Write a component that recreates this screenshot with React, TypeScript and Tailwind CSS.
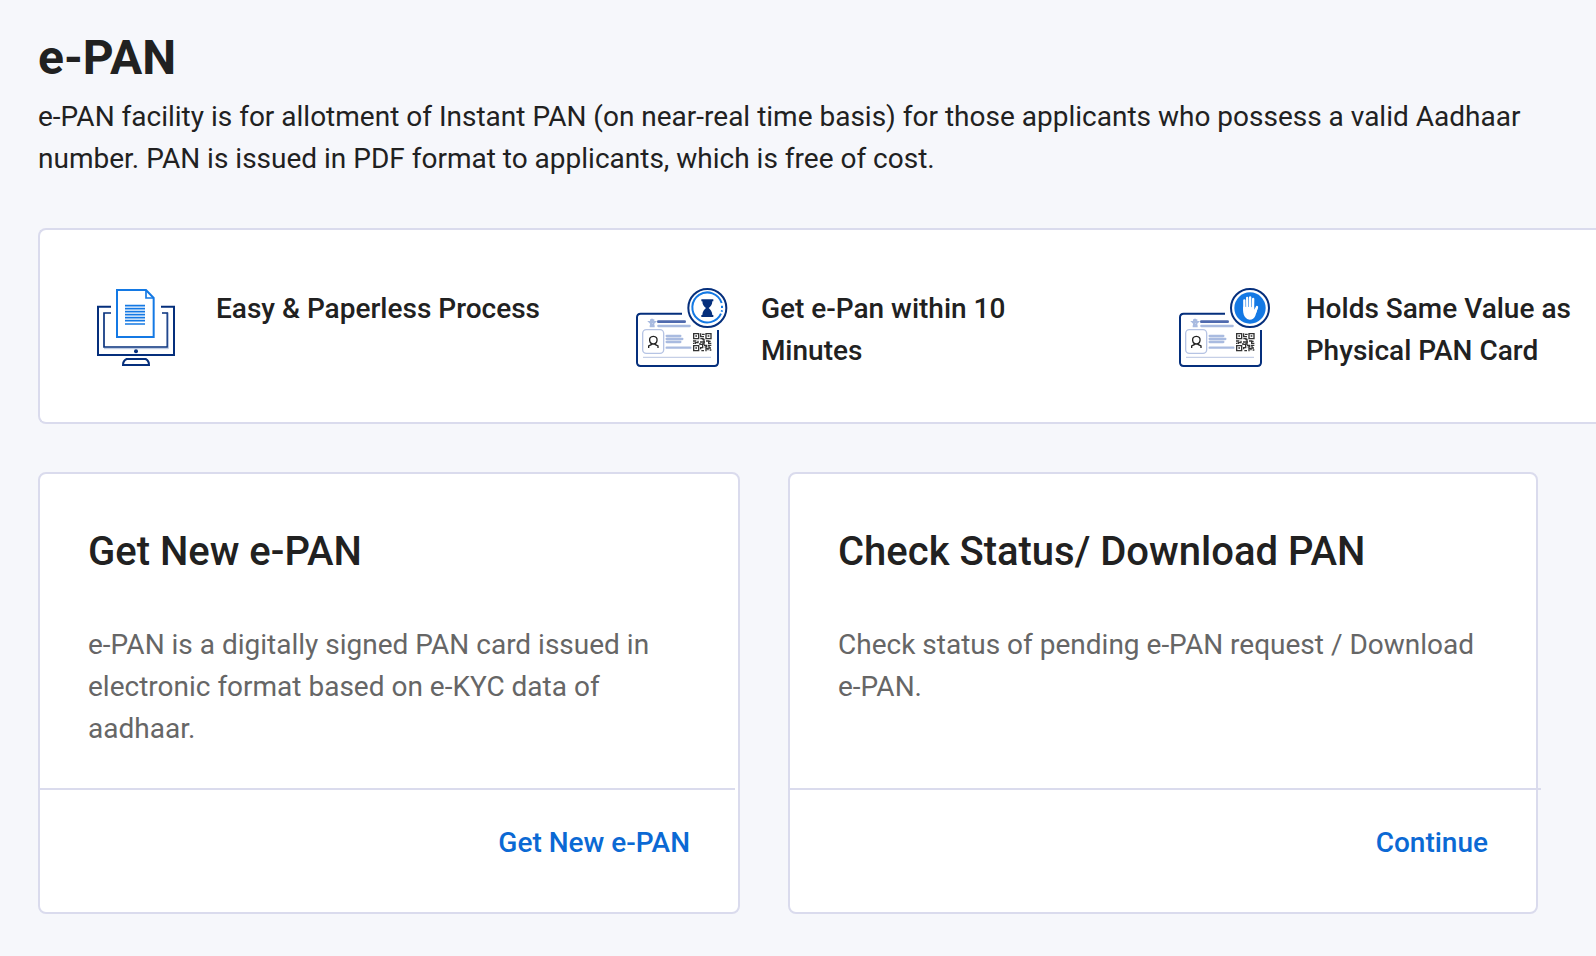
import type { ReactNode } from "react";

const NAVY = "#052f7c";
const BLUE = "#1479e4";
const PALE = "#a9bbe0";

function PaperlessIcon() {
  return (
    <svg viewBox="24 30 288 288" className="size-24 shrink-0" fill="none" aria-hidden="true">
      <g stroke={NAVY} strokeWidth="6">
        <path d="M93 110H54V255H282V110H243" />
        <path d="M93 129H72V231H262V129H246" strokeWidth="5" />
        <path d="M140 267H197Q207 272 207 285H129Q129 272 140 267Z" />
      </g>
      <path d="M72 236H265V129" stroke="#b4c3df" strokeWidth="3" />
      <circle cx="168" cy="244" r="6" fill={NAVY} />
      <path d="M111 60H198L221 84V201H111Z" stroke={BLUE} strokeWidth="6" />
      <path d="M198 60V84H221" stroke={BLUE} strokeWidth="5" />
      <g stroke={BLUE} strokeWidth="5">
        <path d="M135 107H195M135 116H195M135 125H195M135 134H195M135 143H195M135 152H195M135 162H195" />
      </g>
    </svg>
  );
}

function IdentityCard() {
  return (
    <g fill="none">
      <path
        d="M186 131H62Q51 131 51 142V277Q51 288 62 288H283Q294 288 294 277V180"
        stroke={NAVY}
        strokeWidth="6"
      />
      <path
        d="M90 151H103M96 146V152M89 156H104L100 160V165H93V160ZM89 169H104"
        stroke={PALE}
        strokeWidth="6"
      />
      <path d="M115 155H194" stroke="#4f6aae" strokeWidth="8" strokeLinecap="round" />
      <path d="M115 168H209" stroke={PALE} strokeWidth="7" strokeLinecap="round" />
      <rect x="68" y="179" width="63" height="71" rx="11" stroke="#b6c4e4" strokeWidth="4" />
      <path
        d="M100 199C91 199 88 205 89 212C90 218 95 222 100 222C105 222 110 218 111 212C112 205 109 199 100 199ZM93 220L94 224L86 228V234M107 220L106 224L114 228V234"
        stroke="#222"
        strokeWidth="4"
      />
      <path
        d="M140 198H181M140 207H187M140 216H181M140 233H211"
        stroke={PALE}
        strokeWidth="7"
        strokeLinecap="round"
      />
      <path d="M69 262H273" stroke="#c5cfe6" strokeWidth="4" />
      <g stroke="#333" strokeWidth="4">
        <path d="M221 191H236V206H221ZM258 191H273V206H258ZM221 227H236V242H221Z" />
        <path d="M226 198H231M263 198H268M226 234H231M242 190V200H252M246 193H254M241 206H249V211M219 213H229M234 212V218H226V222M240 216H255M252 206V222H246M258 213H266V220H274M270 212V216M241 223H248V233H242V238M252 226H260V231H254M264 226H274M267 224V234H273M256 236H264V241M244 242H252M269 240H274M258 244V238M219 220H223M237 222H243" />
      </g>
    </g>
  );
}

function QuickCardIcon() {
  return (
    <svg viewBox="39 30 288 288" className="size-24 shrink-0" fill="none" aria-hidden="true">
      <IdentityCard />
      <circle cx="262" cy="114" r="57" fill="#fff" stroke={NAVY} strokeWidth="6" />
      <path
        d="M305 99A45 45 0 1 0 303 131M306 107V114M306 121L305 125"
        stroke={BLUE}
        strokeWidth="6"
      />
      <path
        d="M244 88H280V94H277C277 105 271 111 266 114C271 118 277 125 277 135H280V141H244V135H247C247 125 253 118 258 114C253 111 247 105 247 94H244Z"
        fill={NAVY}
      />
    </svg>
  );
}

function TrustedCardIcon() {
  return (
    <svg viewBox="39 30 288 288" className="size-24 shrink-0" fill="none" aria-hidden="true">
      <g transform="translate(-6 0)">
        <IdentityCard />
      </g>
      <circle cx="255" cy="114" r="57" fill="#fff" stroke={NAVY} strokeWidth="6" />
      <circle cx="255" cy="114" r="47" fill={BLUE} />
      <g stroke="#fff" strokeWidth="7" strokeLinecap="round">
        <path d="M238 91V120M246.500 84L247 118M255.500 82V118M264.500 87L264 120M276 111L270 128" />
      </g>
      <path
        d="M234.500 110V126Q237 147 254 149Q266 149 271 137L279 112Q273 108 267.500 119V112Z"
        fill="#fff"
      />
    </svg>
  );
}

function Feature({ icon, children }: { icon: ReactNode; children: ReactNode }) {
  return (
    <li className="flex gap-8 pl-12">
      {icon}
      <p className="mt-2 text-[28px] leading-[42px] font-medium">{children}</p>
    </li>
  );
}

function ActionCard({
  title,
  text,
  action,
  rule,
}: {
  title: string;
  text: string;
  action: string;
  rule: string;
}) {
  return (
    <article className="flex flex-col rounded-lg border-2 border-[#dadbed] bg-white">
      <div className="grow px-12 pt-[54px] pb-[38px]">
        <h2 className="text-[40px] leading-[48px] font-medium">{title}</h2>
        <p className="mt-12 text-[28px] leading-[42px] text-[#666]">{text}</p>
      </div>
      <hr className={`border-t-2 border-[#dadbed] ${rule}`} />
      <div className="flex justify-end px-12 pt-8 pb-12">
        <a href="#" className="text-[28px] leading-[42px] font-medium text-[#0b69d4]">
          {action}
        </a>
      </div>
    </article>
  );
}

export default function App() {
  return (
    <main className="min-h-screen overflow-x-hidden bg-[#f6f7fb] pt-[29px] pb-10 pl-[38px] font-['Roboto',sans-serif] text-[#212121]">
      <header className="pr-[38px]">
        <h1 className="text-5xl leading-[58px] font-bold">e-PAN</h1>
        <p className="mt-[9px] text-[28px] leading-[42px]">
          e-PAN facility is for allotment of Instant PAN (on near-real time basis) for those
          applicants who possess a valid Aadhaar number. PAN is issued in PDF format to applicants,
          which is free of cost.
        </p>
      </header>

      <ul className="mt-12 grid grid-cols-[11fr_11fr_10fr] gap-x-8 rounded-l-lg border-2 border-r-0 border-[#dadbed] bg-white pt-[50px] pb-[46px]">
        <Feature icon={<PaperlessIcon />}>Easy &amp; Paperless Process</Feature>
        <Feature icon={<QuickCardIcon />}>Get e-Pan within 10 Minutes</Feature>
        <Feature icon={<TrustedCardIcon />}>Holds Same Value as Physical PAN Card</Feature>
      </ul>

      <section className="mt-12 mr-[58px] grid grid-cols-[117fr_125fr] gap-12">
        <ActionCard
          title="Get New e-PAN"
          text="e-PAN is a digitally signed PAN card issued in electronic format based on e-KYC data of aadhaar."
          action="Get New e-PAN"
          rule="mr-[3px]"
        />
        <ActionCard
          title="Check Status/ Download PAN"
          text="Check status of pending e-PAN request / Download e-PAN."
          action="Continue"
          rule="-mr-[5px]"
        />
      </section>
    </main>
  );
}
